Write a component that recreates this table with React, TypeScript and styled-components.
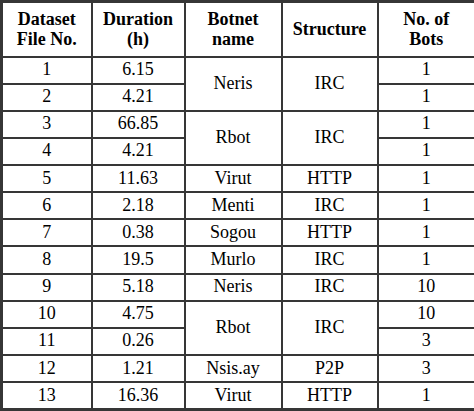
import styled, { createGlobalStyle } from "styled-components";

const GlobalStyle = createGlobalStyle`
  html, body {
    margin: 0;
    padding: 0;
    background: #ffffff;
  }
`;

const Table = styled.table`
  width: 474px;
  height: 411px;
  border-collapse: collapse;
  table-layout: fixed;
  font-family: "Liberation Serif", "Times New Roman", serif;
  font-size: 18px;
  color: #000000;
  border: 3px solid #363636;
`;

const HeadRow = styled.tr`
  height: 55px;
`;

const Row = styled.tr`
  height: 27px;
`;

const Th = styled.th`
  border: 2px solid #363636;
  font-weight: bold;
  line-height: 20px;
  text-align: center;
  vertical-align: middle;
  padding: 0 2px;
`;

const Td = styled.td`
  border: 2px solid #363636;
  text-align: center;
  vertical-align: middle;
  padding: 0 0 2px;
  line-height: 20px;
`;

type Entry = {
  file: string;
  hours: string;
  name?: string;
  structure?: string;
  span?: number;
  bots: string;
};

const rows: Entry[] = [
  { file: "1", hours: "6.15", name: "Neris", structure: "IRC", span: 2, bots: "1" },
  { file: "2", hours: "4.21", bots: "1" },
  { file: "3", hours: "66.85", name: "Rbot", structure: "IRC", span: 2, bots: "1" },
  { file: "4", hours: "4.21", bots: "1" },
  { file: "5", hours: "11.63", name: "Virut", structure: "HTTP", bots: "1" },
  { file: "6", hours: "2.18", name: "Menti", structure: "IRC", bots: "1" },
  { file: "7", hours: "0.38", name: "Sogou", structure: "HTTP", bots: "1" },
  { file: "8", hours: "19.5", name: "Murlo", structure: "IRC", bots: "1" },
  { file: "9", hours: "5.18", name: "Neris", structure: "IRC", bots: "10" },
  { file: "10", hours: "4.75", name: "Rbot", structure: "IRC", span: 2, bots: "10" },
  { file: "11", hours: "0.26", bots: "3" },
  { file: "12", hours: "1.21", name: "Nsis.ay", structure: "P2P", bots: "3" },
  { file: "13", hours: "16.36", name: "Virut", structure: "HTTP", bots: "1" },
];

export default function App() {
  return (
    <>
      <GlobalStyle />
      <Table>
        <colgroup>
          <col style={{ width: 90 }} />
          <col style={{ width: 93 }} />
          <col style={{ width: 97 }} />
          <col style={{ width: 96 }} />
          <col style={{ width: 98 }} />
        </colgroup>
        <thead>
          <HeadRow>
            <Th>
              Dataset
              <br />
              File No.
            </Th>
            <Th>
              Duration
              <br />
              (h)
            </Th>
            <Th>
              Botnet
              <br />
              name
            </Th>
            <Th>Structure</Th>
            <Th>
              No. of
              <br />
              Bots
            </Th>
          </HeadRow>
        </thead>
        <tbody>
          {rows.map((r) => (
            <Row key={r.file}>
              <Td>{r.file}</Td>
              <Td>{r.hours}</Td>
              {r.name && <Td rowSpan={r.span ?? 1}>{r.name}</Td>}
              {r.structure && <Td rowSpan={r.span ?? 1}>{r.structure}</Td>}
              <Td>{r.bots}</Td>
            </Row>
          ))}
        </tbody>
      </Table>
    </>
  );
}
